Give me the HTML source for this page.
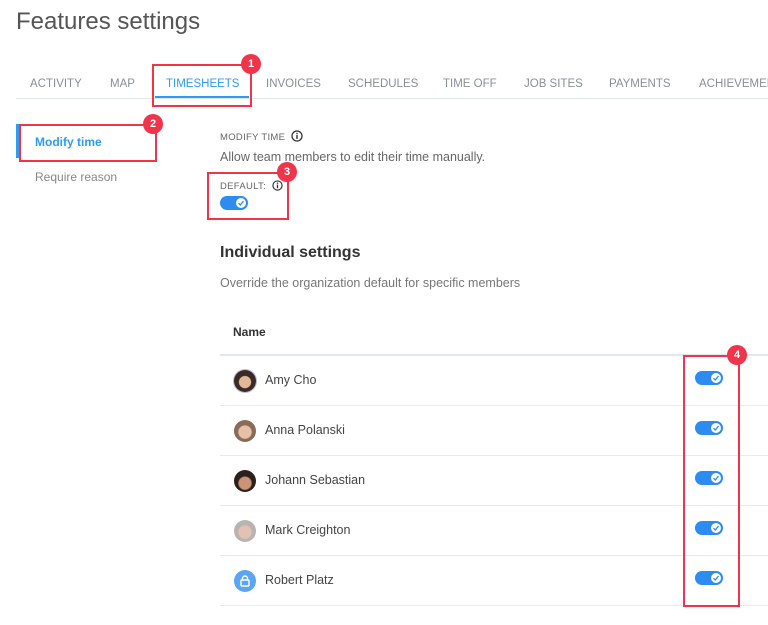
<!DOCTYPE html>
<html><head><meta charset="utf-8"><style>
*{margin:0;padding:0;box-sizing:border-box}
body{width:768px;height:625px;background:#fff;font-family:"Liberation Sans",sans-serif;position:relative;overflow:hidden;color:#444}
.a{position:absolute;white-space:nowrap}
.tab{position:absolute;top:78px;font-size:11.5px;color:#8a8f96;letter-spacing:0}
.rb{position:absolute;border:2px solid #f0344a}
.bd{position:absolute;width:20px;height:20px;border-radius:50%;background:#f0344a;color:#fff;font-size:11px;font-weight:bold;text-align:center;line-height:20px}
.tg{position:absolute;width:28px;height:14px;border-radius:7px;background:#2d8cf0}
.tg::after{content:"";position:absolute;right:2px;top:2px;width:10px;height:10px;border-radius:50%;background:#fff}
.tg svg{position:absolute;right:3px;top:3px;z-index:1}
.row{position:absolute;left:220px;width:548px;height:50px;border-bottom:1px solid #e8eaed}
.av{position:absolute;left:14px;top:14px;width:22px;height:22px;border-radius:50%}
.nm{position:absolute;left:45px;top:17px;font-size:12.5px;color:#444}
.info{display:inline-block;vertical-align:-2px;margin-left:3px}
</style></head><body>
<div class="a" style="left:16px;top:8px;font-size:24px;color:#555">Features settings</div>
<div class="a" style="left:16px;top:98px;width:752px;height:1px;background:#e4e7ea"></div>
<div class="tab" style="left:30px">ACTIVITY</div>
<div class="tab" style="left:110px">MAP</div>
<div class="tab" style="left:166px;color:#2d9cf0">TIMESHEETS</div>
<div class="tab" style="left:266px">INVOICES</div>
<div class="tab" style="left:348px">SCHEDULES</div>
<div class="tab" style="left:443px">TIME OFF</div>
<div class="tab" style="left:524px">JOB SITES</div>
<div class="tab" style="left:609px">PAYMENTS</div>
<div class="tab" style="left:699px">ACHIEVEMENTS</div>
<div class="a" style="left:155px;top:96px;width:94px;height:2px;background:#2d9cf0"></div>
<div class="rb" style="left:152px;top:64px;width:100px;height:43px"></div>
<div class="bd" style="left:241px;top:54px">1</div>

<div class="a" style="left:16px;top:124px;width:3px;height:34px;background:#2d9cf0"></div>
<div class="a" style="left:35px;top:135px;font-size:12px;font-weight:bold;color:#2d9cf0">Modify time</div>
<div class="rb" style="left:19px;top:124px;width:138px;height:38px"></div>
<div class="bd" style="left:143px;top:114px">2</div>
<div class="a" style="left:35px;top:170px;font-size:12px;color:#888">Require reason</div>

<div class="a" style="left:220px;top:130px;font-size:9.5px;color:#666;letter-spacing:.3px">MODIFY TIME <svg class="info" width="12" height="12" viewBox="0 0 12 12"><circle cx="6" cy="6" r="5" fill="none" stroke="#333" stroke-width="1.3"/><rect x="5.3" y="5" width="1.4" height="4" fill="#333"/><rect x="5.3" y="2.8" width="1.4" height="1.4" fill="#333"/></svg></div>
<div class="a" style="left:220px;top:150px;font-size:12.5px;color:#666">Allow team members to edit their time manually.</div>
<div class="a" style="left:220px;top:180px;font-size:9.5px;color:#666;letter-spacing:.3px">DEFAULT: <svg class="info" width="11" height="11" viewBox="0 0 12 12"><circle cx="6" cy="6" r="5" fill="none" stroke="#333" stroke-width="1.3"/><rect x="5.3" y="5" width="1.4" height="4" fill="#333"/><rect x="5.3" y="2.8" width="1.4" height="1.4" fill="#333"/></svg></div>
<div class="tg" style="left:220px;top:196px"><svg width="8" height="8" viewBox="0 0 8 8"><path d="M1.5 4.2L3.3 6L6.5 2" stroke="#2d8cf0" stroke-width="1.3" fill="none"/></svg></div>
<div class="rb" style="left:207px;top:172px;width:82px;height:48px"></div>
<div class="bd" style="left:277px;top:162px">3</div>

<div class="a" style="left:220px;top:244px;font-size:16px;font-weight:bold;color:#333">Individual settings</div>
<div class="a" style="left:220px;top:276px;font-size:12.5px;color:#777">Override the organization default for specific members</div>
<div class="a" style="left:233px;top:325px;font-size:12px;font-weight:bold;color:#333">Name</div>
<div class="a" style="left:220px;top:354px;width:548px;height:2px;background:#e4e7ea"></div>

<div class="row" style="top:356px"><div class="av" style="background:radial-gradient(circle at 50% 55%,#e0b89a 35%,#3a2a22 40%);box-shadow:0 0 0 1px #b9b6e8"></div><div class="nm">Amy Cho</div></div>
<div class="row" style="top:406px"><div class="av" style="background:radial-gradient(circle at 50% 55%,#e8c0a8 38%,#8a6a58 44%)"></div><div class="nm">Anna Polanski</div></div>
<div class="row" style="top:456px"><div class="av" style="background:radial-gradient(circle at 50% 60%,#c99478 35%,#2a201c 42%)"></div><div class="nm">Johann Sebastian</div></div>
<div class="row" style="top:506px"><div class="av" style="background:radial-gradient(circle at 50% 55%,#e2c2b2 38%,#b8b4b2 44%)"></div><div class="nm">Mark Creighton</div></div>
<div class="row" style="top:556px"><div class="av" style="background:#5aa6f2"><svg width="22" height="22" viewBox="0 0 22 22"><rect x="7" y="10" width="8" height="6" rx="1" fill="none" stroke="#fff" stroke-width="1.4"/><path d="M8.5 10V8.5a2.5 2.5 0 0 1 5 0V10" fill="none" stroke="#fff" stroke-width="1.4"/></svg></div><div class="nm">Robert Platz</div></div>

<div class="tg" style="left:695px;top:371px"><svg width="8" height="8" viewBox="0 0 8 8"><path d="M1.5 4.2L3.3 6L6.5 2" stroke="#2d8cf0" stroke-width="1.3" fill="none"/></svg></div>
<div class="tg" style="left:695px;top:421px"><svg width="8" height="8" viewBox="0 0 8 8"><path d="M1.5 4.2L3.3 6L6.5 2" stroke="#2d8cf0" stroke-width="1.3" fill="none"/></svg></div>
<div class="tg" style="left:695px;top:471px"><svg width="8" height="8" viewBox="0 0 8 8"><path d="M1.5 4.2L3.3 6L6.5 2" stroke="#2d8cf0" stroke-width="1.3" fill="none"/></svg></div>
<div class="tg" style="left:695px;top:521px"><svg width="8" height="8" viewBox="0 0 8 8"><path d="M1.5 4.2L3.3 6L6.5 2" stroke="#2d8cf0" stroke-width="1.3" fill="none"/></svg></div>
<div class="tg" style="left:695px;top:571px"><svg width="8" height="8" viewBox="0 0 8 8"><path d="M1.5 4.2L3.3 6L6.5 2" stroke="#2d8cf0" stroke-width="1.3" fill="none"/></svg></div>
<div class="rb" style="left:683px;top:355px;width:57px;height:252px"></div>
<div class="bd" style="left:727px;top:345px">4</div>
</body></html>
